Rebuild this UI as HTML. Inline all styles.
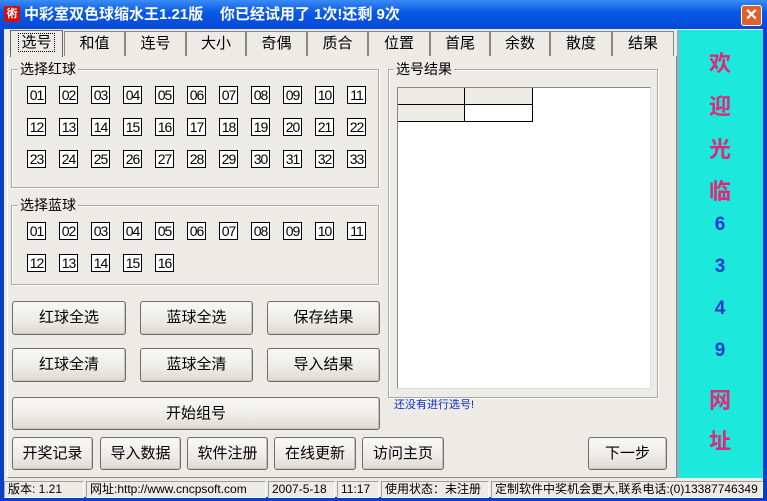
<!DOCTYPE html><html><head><meta charset="utf-8"><style>
*{margin:0;padding:0;box-sizing:border-box}
body{width:767px;height:501px;position:relative;overflow:hidden;background:#0a3fc8;font-family:"Liberation Sans","Noto Sans CJK SC",sans-serif;font-size:14px;color:#000}
.a{position:absolute}
#title{left:0;top:0;width:767px;height:30px;background:linear-gradient(#3a8cf5,#0a5ae6 40%,#0548d8);}
#client{left:4px;top:29px;width:759px;height:468px;background:#ecebe6}
.tab{position:absolute;top:31px;height:25px;border:1px solid #888;border-bottom:none;background:#ecebe6;text-align:center;line-height:24px;font-size:15px}
.g{position:absolute;border:1px solid #a9a9a9;box-shadow:inset 1px 1px 0 #fff,1px 1px 0 #fff}
.gl{position:absolute;background:#ecebe6;padding:0 2px;font-size:14px;line-height:16px}
.n{position:absolute;width:19px;height:18px;border:1px solid #000;background:#fff;font-size:14px;line-height:16px;text-align:center;font-family:"Liberation Sans Narrow","Liberation Sans",sans-serif;letter-spacing:-1px}
.b{position:absolute;border:1px solid #6d6d6d;border-radius:3px;background:linear-gradient(#f8f8f6,#ecebe6 60%,#dcdad2);text-align:center;font-size:15px;box-shadow:inset -1px -1px 0 #c8c6bc}
.s{position:absolute;top:481px;height:17px;border:1px solid #a0a0a0;border-right-color:#fff;border-bottom-color:#fff;font-size:12px;line-height:15px;padding-left:3px;white-space:nowrap}
.sc{position:absolute;left:677px;width:86px;text-align:center;color:#e0287a;font-weight:bold;font-size:22px}
</style></head><body>
<div id="title" class="a"></div>
<div class="a" style="left:4px;top:6px;width:16px;height:16px;background:#d01010;color:#fff;font-size:11px;line-height:16px;text-align:center;font-weight:bold">術</div>
<div class="a" style="left:24px;top:5px;color:#fff;font-weight:bold;font-size:15px;line-height:20px;white-space:nowrap">中彩室双色球缩水王1.21版&nbsp;&nbsp;&nbsp;&nbsp;你已经试用了 1次!还剩 9次</div>
<div class="a" style="left:741px;top:5px;width:21px;height:21px;border:1px solid #fff;border-radius:3px;background:#e0602c;color:#fff;text-align:center;line-height:19px;font-weight:bold;font-size:16px">✕</div>
<div id="client" class="a"></div>
<div class="a" style="left:7px;top:55px;width:670px;height:423px;border:1px solid #fff;border-right-color:#888;border-bottom-color:#888"></div>
<div class="tab" style="left:10px;top:30px;width:53px;height:27px;z-index:2;border-color:#666"><span style="border:1px dotted #000;padding:0 2px">选号</span></div>
<div class="tab" style="left:64px;width:61px">和值</div>
<div class="tab" style="left:125px;width:61px">连号</div>
<div class="tab" style="left:186px;width:60px">大小</div>
<div class="tab" style="left:246px;width:61px">奇偶</div>
<div class="tab" style="left:307px;width:61px">质合</div>
<div class="tab" style="left:368px;width:62px">位置</div>
<div class="tab" style="left:430px;width:60px">首尾</div>
<div class="tab" style="left:490px;width:60px">余数</div>
<div class="tab" style="left:550px;width:62px">散度</div>
<div class="tab" style="left:612px;width:62px">结果</div>

<div class="g" style="left:11px;top:69px;width:368px;height:119px"></div><div class="gl" style="left:18px;top:61px">选择红球</div>
<div class="n" style="left:27px;top:86px">01</div><div class="n" style="left:59px;top:86px">02</div><div class="n" style="left:91px;top:86px">03</div><div class="n" style="left:123px;top:86px">04</div><div class="n" style="left:155px;top:86px">05</div><div class="n" style="left:187px;top:86px">06</div><div class="n" style="left:219px;top:86px">07</div><div class="n" style="left:251px;top:86px">08</div><div class="n" style="left:283px;top:86px">09</div><div class="n" style="left:315px;top:86px">10</div><div class="n" style="left:347px;top:86px">11</div>
<div class="n" style="left:27px;top:118px">12</div><div class="n" style="left:59px;top:118px">13</div><div class="n" style="left:91px;top:118px">14</div><div class="n" style="left:123px;top:118px">15</div><div class="n" style="left:155px;top:118px">16</div><div class="n" style="left:187px;top:118px">17</div><div class="n" style="left:219px;top:118px">18</div><div class="n" style="left:251px;top:118px">19</div><div class="n" style="left:283px;top:118px">20</div><div class="n" style="left:315px;top:118px">21</div><div class="n" style="left:347px;top:118px">22</div>
<div class="n" style="left:27px;top:150px">23</div><div class="n" style="left:59px;top:150px">24</div><div class="n" style="left:91px;top:150px">25</div><div class="n" style="left:123px;top:150px">26</div><div class="n" style="left:155px;top:150px">27</div><div class="n" style="left:187px;top:150px">28</div><div class="n" style="left:219px;top:150px">29</div><div class="n" style="left:251px;top:150px">30</div><div class="n" style="left:283px;top:150px">31</div><div class="n" style="left:315px;top:150px">32</div><div class="n" style="left:347px;top:150px">33</div>

<div class="g" style="left:11px;top:205px;width:368px;height:80px"></div><div class="gl" style="left:18px;top:197px">选择蓝球</div>
<div class="n" style="left:27px;top:222px">01</div><div class="n" style="left:59px;top:222px">02</div><div class="n" style="left:91px;top:222px">03</div><div class="n" style="left:123px;top:222px">04</div><div class="n" style="left:155px;top:222px">05</div><div class="n" style="left:187px;top:222px">06</div><div class="n" style="left:219px;top:222px">07</div><div class="n" style="left:251px;top:222px">08</div><div class="n" style="left:283px;top:222px">09</div><div class="n" style="left:315px;top:222px">10</div><div class="n" style="left:347px;top:222px">11</div>
<div class="n" style="left:27px;top:254px">12</div><div class="n" style="left:59px;top:254px">13</div><div class="n" style="left:91px;top:254px">14</div><div class="n" style="left:123px;top:254px">15</div><div class="n" style="left:155px;top:254px">16</div>

<div class="g" style="left:388px;top:69px;width:270px;height:329px"></div><div class="gl" style="left:394px;top:61px">选号结果</div>
<div class="a" style="left:397px;top:87px;width:254px;height:302px;background:#fff;border:1px solid #888;border-right-color:#ddd;border-bottom-color:#ddd"></div>
<div class="a" style="left:398px;top:88px;width:67px;height:34px;background:#ecebe6;border-right:1px solid #000;border-bottom:1px solid #000"></div>
<div class="a" style="left:465px;top:88px;width:68px;height:17px;background:#ecebe6"></div>
<div class="a" style="left:465px;top:88px;width:68px;height:34px;border-right:1px solid #000;border-bottom:1px solid #000"></div>
<div class="a" style="left:398px;top:104px;width:135px;height:1px;background:#000"></div>
<div class="a" style="left:394px;top:396px;color:#1030c0;font-size:11px">还没有进行选号!</div>

<div class="b" style="left:12px;top:301px;width:114px;height:34px;line-height:32px">红球全选</div>
<div class="b" style="left:140px;top:301px;width:113px;height:34px;line-height:32px">蓝球全选</div>
<div class="b" style="left:267px;top:301px;width:113px;height:34px;line-height:32px">保存结果</div>
<div class="b" style="left:12px;top:348px;width:114px;height:34px;line-height:32px">红球全清</div>
<div class="b" style="left:140px;top:348px;width:113px;height:34px;line-height:32px">蓝球全清</div>
<div class="b" style="left:267px;top:348px;width:113px;height:34px;line-height:32px">导入结果</div>
<div class="b" style="left:12px;top:397px;width:368px;height:33px;line-height:31px">开始组号</div>
<div class="b" style="left:12px;top:437px;width:81px;height:33px;line-height:31px">开奖记录</div>
<div class="b" style="left:100px;top:437px;width:81px;height:33px;line-height:31px">导入数据</div>
<div class="b" style="left:187px;top:437px;width:81px;height:33px;line-height:31px">软件注册</div>
<div class="b" style="left:274px;top:437px;width:82px;height:33px;line-height:31px">在线更新</div>
<div class="b" style="left:362px;top:437px;width:82px;height:33px;line-height:31px">访问主页</div>
<div class="b" style="left:588px;top:437px;width:79px;height:33px;line-height:31px">下一步</div>

<div class="a" style="left:677px;top:30px;width:86px;height:448px;background:#1de8dc;border-left:2px solid #9ab"></div>
<div class="sc" style="top:46px">欢</div><div class="sc" style="top:89px">迎</div><div class="sc" style="top:132px">光</div><div class="sc" style="top:174px">临</div>
<div class="sc" style="top:214px;font-size:19px;color:#1a3ad0">6</div><div class="sc" style="top:256px;font-size:19px;color:#1a3ad0">3</div><div class="sc" style="top:298px;font-size:19px;color:#1a3ad0">4</div><div class="sc" style="top:340px;font-size:19px;color:#1a3ad0">9</div>
<div class="sc" style="top:383px">网</div><div class="sc" style="top:424px">址</div>

<div class="s" style="left:4px;width:80px">版本: 1.21</div>
<div class="s" style="left:86px;width:180px">网址:http://www.cncpsoft.com</div>
<div class="s" style="left:268px;width:67px">2007-5-18</div>
<div class="s" style="left:337px;width:42px">11:17</div>
<div class="s" style="left:381px;width:108px">使用状态：未注册</div>
<div class="s" style="left:491px;width:272px">定制软件中奖机会更大,联系电话:(0)13387746349</div>
</body></html>
